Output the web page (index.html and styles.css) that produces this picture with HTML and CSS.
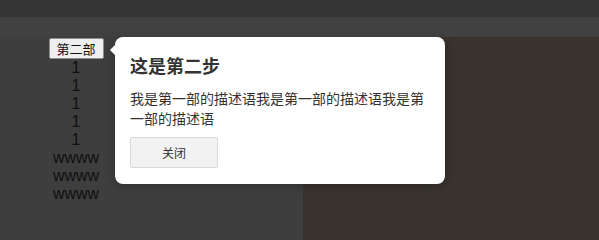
FILE: index.html
```html
<!DOCTYPE html>
<html lang="zh">
<head>
<meta charset="utf-8">
<link rel="stylesheet" href="styles.css">
</head>
<body>
<div class="topbar"></div>
<div class="band"></div>
<div class="main">
  <div class="left">
    <div class="col">
      <button class="step-btn">第二部</button>
      <div class="line">1</div>
      <div class="line">1</div>
      <div class="line">1</div>
      <div class="line">1</div>
      <div class="line">1</div>
      <div class="line">wwww</div>
      <div class="line">wwww</div>
      <div class="line">wwww</div>
    </div>
  </div>
  <div class="right"></div>
</div>
<div class="popover">
  <span class="arrow"></span>
  <div class="title">这是第二步</div>
  <div class="desc">我是第一部的描述语我是第一部的描述语我是第一部的描述语</div>
  <button class="close-btn">关闭</button>
</div>
</body>
</html>
```
FILE: styles.css
```css
html, body {
  margin: 0;
  padding: 0;
  height: 100%;
  overflow: hidden;
}
body {
  background: #404040;
  font-family: "Liberation Sans", Arial, sans-serif;
  display: flex;
  flex-direction: column;
}
.topbar {
  height: 17px;
  background: #353535;
  flex: none;
}
.band {
  height: 20px;
  background: #414141;
  flex: none;
}
.main {
  flex: 1;
  display: flex;
}
.left {
  width: 303px;
  background: #3e3e3e;
}
.right {
  flex: 1;
  background: #38332c;
}
.col {
  width: 136px;
  margin-left: 8px;
  padding-top: 1px;
  text-align: center;
}
.step-btn {
  display: block;
  margin: 0 auto;
  width: 55px;
  height: 21px;
  padding: 0;
  box-sizing: border-box;
  background: #efefef;
  border: 1px solid #8f8f8f;
  border-radius: 2px;
  font-family: "Noto Sans CJK SC", sans-serif;
  font-size: 13px;
  line-height: 18px;
  color: #111;
}
.line {
  font-size: 16px;
  line-height: 18px;
  color: #101010;
}
.popover {
  position: absolute;
  left: 115px;
  top: 37px;
  width: 330px;
  box-sizing: border-box;
  padding: 15px 15px 16px;
  background: #fff;
  border-radius: 8px;
  box-shadow: 0 2px 8px rgba(0, 0, 0, 0.25);
  font-family: "Noto Sans CJK SC", sans-serif;
  color: #333;
}
.arrow {
  position: absolute;
  left: -5px;
  top: 8px;
  width: 0;
  height: 0;
  border-top: 5px solid transparent;
  border-bottom: 5px solid transparent;
  border-right: 5px solid #fff;
}
.title {
  font-size: 18px;
  font-weight: bold;
  line-height: 27px;
  color: #333;
}
.desc {
  margin-top: 9px;
  font-size: 14px;
  line-height: 20px;
  color: #333;
}
.close-btn {
  display: block;
  margin-top: 9px;
  width: 88px;
  height: 31px;
  box-sizing: border-box;
  background: #f2f2f2;
  border: 1px solid #d9d9d9;
  border-radius: 2px;
  font-family: "Noto Sans CJK SC", sans-serif;
  font-size: 12px;
  color: #333;
  padding: 0;
}
```
